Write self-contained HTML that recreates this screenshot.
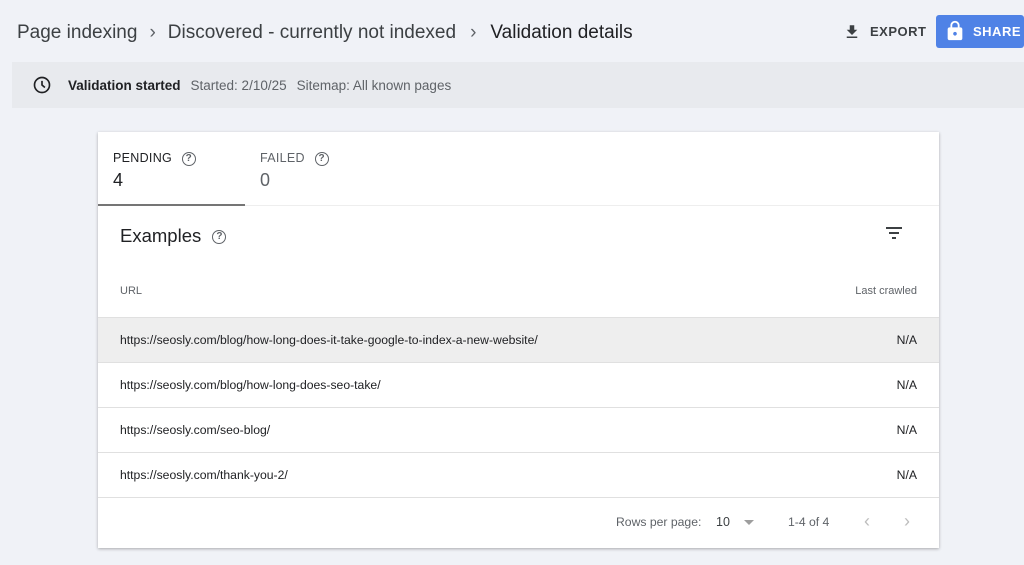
<!DOCTYPE html>
<html><head><style>
*{margin:0;padding:0;box-sizing:border-box}
body{width:1024px;height:565px;background:#f0f2f7;font-family:"Liberation Sans",Arial,sans-serif;position:relative;overflow:hidden;color:#202124}
.a{position:absolute}
.bc{top:22px;left:17px;font-size:19px;color:#3c4043;white-space:nowrap}
.bc span{display:inline-block}
.bar{left:12px;top:62px;width:1012px;height:46px;background:#e8eaee}
.card{left:98px;top:132px;width:841px;height:416px;background:#fff;box-shadow:0 1px 3px rgba(0,0,0,.3)}
.q{display:inline-block;width:14px;height:14px;border:1.5px solid #5f6368;border-radius:50%;font-size:10px;line-height:11px;text-align:center;color:#5f6368;font-weight:bold;vertical-align:middle}
.row{position:absolute;left:0;width:841px;height:45px;border-top:1px solid #e0e0e0;font-size:12.2px;color:#202124}
.row .u{position:absolute;left:22px;top:15px}
.row .n{position:absolute;right:22px;top:15px}
</style></head><body>
<div class="a bc"><span>Page indexing</span><span style="margin:0 12px 0 12px;color:#5f6368">›</span><span>Discovered - currently not indexed</span><span style="margin:0 14px 0 14px;color:#5f6368">›</span><span style="color:#202124;font-weight:500">Validation details</span></div>
<svg class="a" style="left:843px;top:23px" width="18" height="18" viewBox="0 0 24 24"><path d="M19 9h-4V3H9v6H5l7 7 7-7zM5 18v2h14v-2H5z" fill="#3c4043"/></svg>
<div class="a" style="left:870px;top:24px;font-size:13px;font-weight:bold;color:#3c4043;letter-spacing:.5px">EXPORT</div>
<div class="a" style="left:936px;top:15px;width:88px;height:33px;background:#4f82e6;border-radius:3px"></div>
<svg class="a" style="left:944px;top:20px" width="22" height="22" viewBox="0 0 24 24"><path d="M18 8h-1V6c0-2.76-2.24-5-5-5S7 3.24 7 6v2H6c-1.1 0-2 .9-2 2v10c0 1.1.9 2 2 2h12c1.1 0 2-.9 2-2V10c0-1.1-.9-2-2-2zm-6 9c-1.1 0-2-.9-2-2s.9-2 2-2 2 .9 2 2-.9 2-2 2zM9 8V6c0-1.660 1.34-3 3-3s3 1.34 3 3v2H9z" fill="#fff"/></svg>
<div class="a" style="left:973px;top:24px;font-size:13px;font-weight:bold;color:#fff;letter-spacing:.5px">SHARE</div>
<div class="a bar"></div>
<svg class="a" style="left:32px;top:75px" width="20" height="20" viewBox="0 0 24 24"><circle cx="12" cy="12" r="9" fill="none" stroke="#202124" stroke-width="2"/><path d="M12 7v5l3.5 3" fill="none" stroke="#202124" stroke-width="2"/></svg>
<div class="a" style="left:68px;top:78px;font-size:13.5px;white-space:nowrap"><b style="color:#202124">Validation started</b><span style="color:#5f6368;margin-left:10px">Started: 2/10/25</span><span style="color:#5f6368;margin-left:10px">Sitemap: All known pages</span></div>
<div class="a card">
 <div class="a" style="left:15px;top:19px;font-size:12.5px;font-weight:500;color:#202124;letter-spacing:.3px">PENDING <span class="q" style="margin-left:6px">?</span></div>
 <div class="a" style="left:15px;top:38px;font-size:18px;color:#202124">4</div>
 <div class="a" style="left:162px;top:19px;font-size:12.5px;color:#5f6368;letter-spacing:.3px">FAILED <span class="q" style="margin-left:6px">?</span></div>
 <div class="a" style="left:162px;top:38px;font-size:18px;color:#5f6368">0</div>
 <div class="a" style="left:0;top:72px;width:147px;height:2px;background:#757575"></div>
 <div class="a" style="left:147px;top:73px;width:694px;height:1px;background:#eee"></div>
 <div class="a" style="left:22px;top:93px;font-size:18.5px;color:#202124">Examples <span class="q" style="margin-left:6px">?</span></div>
 <svg class="a" style="left:786px;top:92px" width="20" height="18" viewBox="0 0 20 18"><path d="M2 4h16M5 9h10M8 14h4" stroke="#3c4043" stroke-width="2"/></svg>
 <div class="a" style="left:22px;top:153px;font-size:11px;color:#5f6368">URL</div>
 <div class="a" style="right:22px;top:153px;font-size:11px;color:#5f6368">Last crawled</div>
 <div class="row" style="top:185px;background:#eeeeee"><span class="u">https://seosly.com/blog/how-long-does-it-take-google-to-index-a-new-website/</span><span class="n">N/A</span></div>
 <div class="row" style="top:230px"><span class="u">https://seosly.com/blog/how-long-does-seo-take/</span><span class="n">N/A</span></div>
 <div class="row" style="top:275px"><span class="u">https://seosly.com/seo-blog/</span><span class="n">N/A</span></div>
 <div class="row" style="top:320px"><span class="u">https://seosly.com/thank-you-2/</span><span class="n">N/A</span></div>
 <div class="a" style="left:0;top:365px;width:841px;height:1px;background:#e0e0e0"></div>
 <div class="a" style="left:518px;top:383px;font-size:12.2px;color:#5f6368">Rows per page:</div>
 <div class="a" style="left:618px;top:383px;font-size:12.5px;color:#3c4043">10</div>
 <div class="a" style="left:646px;top:388px;width:0;height:0;border-left:5px solid transparent;border-right:5px solid transparent;border-top:5px solid #9e9e9e"></div>
 <div class="a" style="left:690px;top:383px;font-size:12.2px;color:#5f6368">1-4 of 4</div>
 <div class="a" style="left:766px;top:379px;font-size:18px;color:#bdbdbd">‹</div>
 <div class="a" style="left:806px;top:379px;font-size:18px;color:#bdbdbd">›</div>
</div>
</body></html>
